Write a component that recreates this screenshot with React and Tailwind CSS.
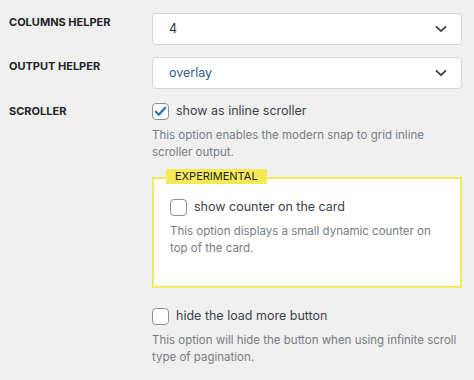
import React from 'react';

const font = { fontFamily: 'Inter, "Open Sans", sans-serif' };

function Chevron() {
    return (
        <svg width="12" height="8" viewBox="0 0 12 8" fill="none" stroke="#3c434a" strokeWidth="1.8" strokeLinecap="round" strokeLinejoin="round">
            <path d="M1.5 1.8 L6 6.2 L10.5 1.8" />
        </svg>
    );
}

function Select({ value, blue }) {
    return (
        <div className="flex h-8 items-center justify-between rounded border border-[#d6d6d8] bg-white pl-4 pr-3.5">
            <span className={'text-[12.5px] ' + (blue ? 'text-[#2c5d8c]' : 'text-[#2c3338]')}>{value}</span>
            <Chevron />
        </div>
    );
}

function Check({ checked }) {
    return (
        <span className="flex h-[17px] w-[17px] shrink-0 items-center justify-center rounded-[4px] border border-[#8c8f94] bg-white">
            {checked && (
                <svg width="13" height="11" viewBox="0 0 13 11" fill="none" stroke="#2271b1" strokeWidth="2.2" strokeLinecap="round" strokeLinejoin="round">
                    <path d="M1.8 5.8 L4.8 8.8 L11.2 1.8" />
                </svg>
            )}
        </span>
    );
}

function Option({ checked, label, children }) {
    return (
        <div>
            <div className="flex items-center gap-[7px]">
                <Check checked={checked} />
                <span className="text-[12.5px] text-[#3c434a]">{label}</span>
            </div>
            <p className="mt-[6px] text-[11.5px] leading-[17px] text-[#787c82]">{children}</p>
        </div>
    );
}

export default function App() {
    return (
        <div className="h-[380px] w-[474px] bg-[#f0f0f1] pt-[13px]" style={font}>
            <div className="grid grid-cols-[152px_310px] gap-y-3">
                <div className="pl-[9px] pt-px text-[11px] font-bold leading-4 text-[#1d2327]">COLUMNS HELPER</div>
                <Select value="4" />
                <div className="pl-[9px] pt-px text-[11px] font-bold leading-4 text-[#1d2327]">OUTPUT HELPER</div>
                <Select value="overlay" blue />
                <div className="pl-[9px] pt-[2px] text-[11px] font-bold leading-4 text-[#1d2327]">SCROLLER</div>
                <div className="pt-px">
                    <Option checked label="show as inline scroller">
                        This option enables the modern snap to grid inline scroller output.
                    </Option>

                    <div className="relative mt-[16px] h-[111px] border-2 border-[#f4ea57] bg-white px-[16px] pt-[19px]">
                        <span className="absolute -top-[10px] left-[12px] bg-[#f4ea57] px-[9px] text-[11px] leading-[15px] text-[#1d2327]">EXPERIMENTAL</span>
                        <Option label="show counter on the card">
                            This option displays a small dynamic counter on top of the card.
                        </Option>
                    </div>

                    <div className="mt-[19px]">
                        <Option label="hide the load more button">
                            This option will hide the button when using infinite scroll type of pagination.
                        </Option>
                    </div>
                </div>
            </div>
        </div>
    );
}
